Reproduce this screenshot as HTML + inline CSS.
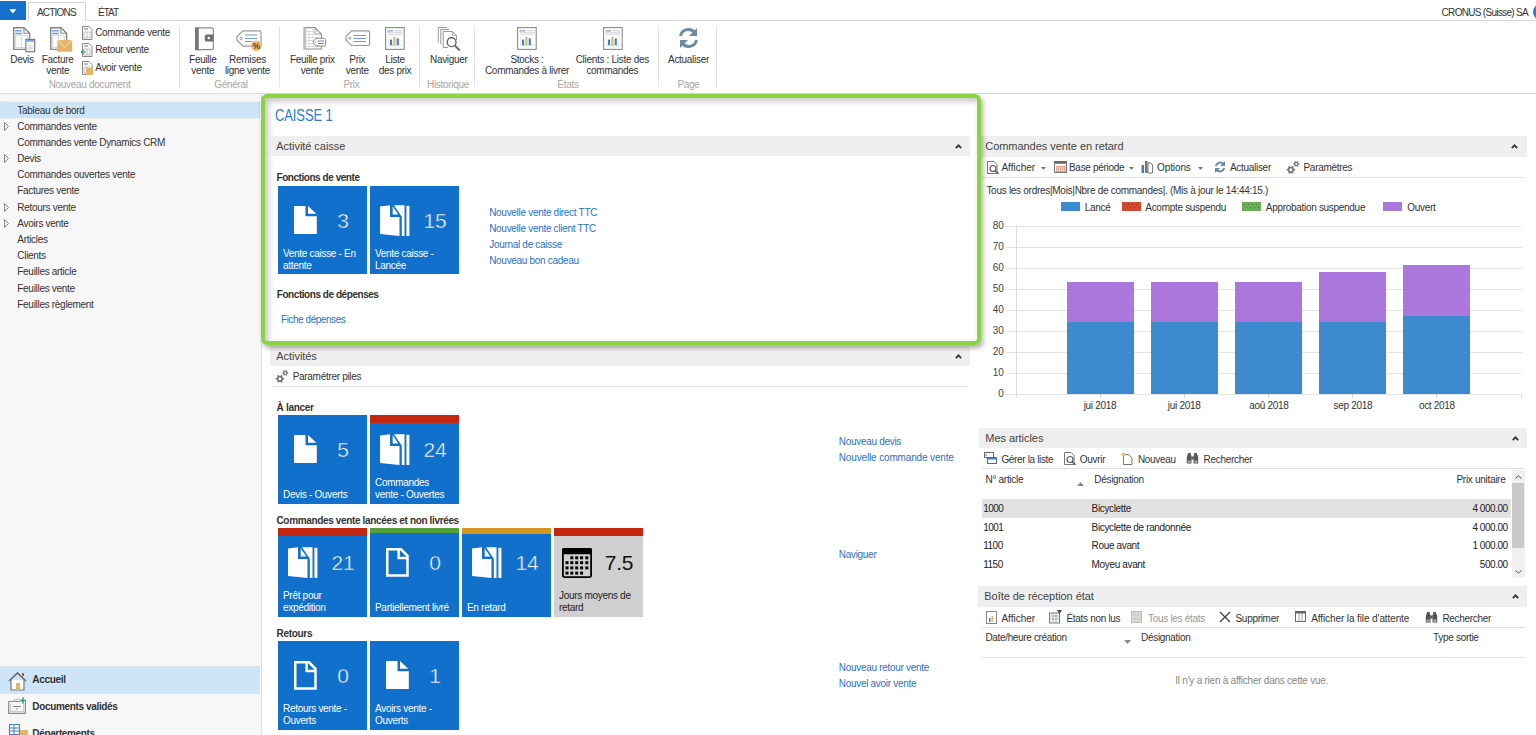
<!DOCTYPE html><html><head><meta charset="utf-8"><style>
html,body{margin:0;padding:0;width:1536px;height:735px;overflow:hidden;background:#fff;position:relative;font-family:"Liberation Sans", sans-serif;}
.t{position:absolute;white-space:nowrap;line-height:1;}
.r{position:absolute;}
</style></head><body>
<div class="r" style="left:0px;top:1px;width:26px;height:19px;background:#1570c9;"></div>
<svg class="r" style="left:9px;top:9px;" width="8" height="5" viewBox="0 0 8 5"><path d="M0.3 0.3 H7.3 L3.8 4.5 Z" fill="#fff"/></svg>
<div class="r" style="left:85px;top:20px;width:1451px;height:1px;background:#d9d9d9;"></div>
<div class="r" style="left:0px;top:20px;width:28px;height:1px;background:#ffffff;"></div>
<div class="r" style="left:28px;top:2px;width:56px;height:18px;border:1px solid #d6d6d6;border-bottom:none;background:#fff"></div>
<div class="t " style="left:37.0px;top:8.00px;font-size:10px;color:#333;letter-spacing:-0.80px;">ACTIONS</div>
<div class="t " style="left:98.0px;top:8.00px;font-size:10px;color:#333;letter-spacing:-1.00px;">ÉTAT</div>
<div class="t " style="left:1441.6px;top:8.00px;font-size:10px;color:#333;letter-spacing:-0.70px;">CRONUS (Suisse) SA</div>
<div class="r" style="left:1533px;top:4px;width:16px;height:16px;border-radius:8px;background:#2f7fd0"></div>
<div class="r" style="left:0px;top:93px;width:1536px;height:1px;background:#dadada;"></div>
<div class="r" style="left:179px;top:26px;width:1px;height:61px;background:#e3e3e3;"></div>
<div class="r" style="left:279px;top:26px;width:1px;height:61px;background:#e3e3e3;"></div>
<div class="r" style="left:419px;top:26px;width:1px;height:61px;background:#e3e3e3;"></div>
<div class="r" style="left:474px;top:26px;width:1px;height:61px;background:#e3e3e3;"></div>
<div class="r" style="left:658px;top:26px;width:1px;height:61px;background:#e3e3e3;"></div>
<div class="r" style="left:716px;top:26px;width:1px;height:61px;background:#e3e3e3;"></div>
<div class="t " style="left:-178.0px;width:400px;text-align:center;top:55.00px;font-size:10px;color:#333;letter-spacing:-0.30px;">Devis</div>
<div class="t " style="left:-142.3px;width:400px;text-align:center;top:55.00px;font-size:10px;color:#333;letter-spacing:-0.30px;">Facture</div>
<div class="t " style="left:-142.3px;width:400px;text-align:center;top:66.00px;font-size:10px;color:#333;letter-spacing:-0.30px;">vente</div>
<div class="t " style="left:95.2px;top:28.00px;font-size:10px;color:#333;letter-spacing:-0.30px;">Commande vente</div>
<div class="t " style="left:95.2px;top:45.00px;font-size:10px;color:#333;letter-spacing:-0.30px;">Retour vente</div>
<div class="t " style="left:95.2px;top:63.00px;font-size:10px;color:#333;letter-spacing:-0.30px;">Avoir vente</div>
<div class="t " style="left:-110.4px;width:400px;text-align:center;top:80.00px;font-size:10px;color:#a6a6a6;letter-spacing:-0.30px;">Nouveau document</div>
<div class="t " style="left:2.8px;width:400px;text-align:center;top:55.00px;font-size:10px;color:#333;letter-spacing:-0.30px;">Feuille</div>
<div class="t " style="left:2.8px;width:400px;text-align:center;top:66.00px;font-size:10px;color:#333;letter-spacing:-0.30px;">vente</div>
<div class="t " style="left:47.5px;width:400px;text-align:center;top:55.00px;font-size:10px;color:#333;letter-spacing:-0.30px;">Remises</div>
<div class="t " style="left:47.5px;width:400px;text-align:center;top:66.00px;font-size:10px;color:#333;letter-spacing:-0.30px;">ligne vente</div>
<div class="t " style="left:31.0px;width:400px;text-align:center;top:80.00px;font-size:10px;color:#a6a6a6;letter-spacing:-0.30px;">Général</div>
<div class="t " style="left:112.3px;width:400px;text-align:center;top:55.00px;font-size:10px;color:#333;letter-spacing:-0.30px;">Feuille prix</div>
<div class="t " style="left:112.3px;width:400px;text-align:center;top:66.00px;font-size:10px;color:#333;letter-spacing:-0.30px;">vente</div>
<div class="t " style="left:157.3px;width:400px;text-align:center;top:55.00px;font-size:10px;color:#333;letter-spacing:-0.30px;">Prix</div>
<div class="t " style="left:157.3px;width:400px;text-align:center;top:66.00px;font-size:10px;color:#333;letter-spacing:-0.30px;">vente</div>
<div class="t " style="left:195.0px;width:400px;text-align:center;top:55.00px;font-size:10px;color:#333;letter-spacing:-0.30px;">Liste</div>
<div class="t " style="left:195.0px;width:400px;text-align:center;top:66.00px;font-size:10px;color:#333;letter-spacing:-0.30px;">des prix</div>
<div class="t " style="left:151.4px;width:400px;text-align:center;top:80.00px;font-size:10px;color:#a6a6a6;letter-spacing:-0.30px;">Prix</div>
<div class="t " style="left:248.8px;width:400px;text-align:center;top:55.00px;font-size:10px;color:#333;letter-spacing:-0.30px;">Naviguer</div>
<div class="t " style="left:248.0px;width:400px;text-align:center;top:80.00px;font-size:10px;color:#a6a6a6;letter-spacing:-0.30px;">Historique</div>
<div class="t " style="left:327.0px;width:400px;text-align:center;top:55.00px;font-size:10px;color:#333;letter-spacing:-0.30px;">Stocks :</div>
<div class="t " style="left:327.0px;width:400px;text-align:center;top:66.00px;font-size:10px;color:#333;letter-spacing:-0.30px;">Commandes à livrer</div>
<div class="t " style="left:412.3px;width:400px;text-align:center;top:55.00px;font-size:10px;color:#333;letter-spacing:-0.30px;">Clients : Liste des</div>
<div class="t " style="left:412.3px;width:400px;text-align:center;top:66.00px;font-size:10px;color:#333;letter-spacing:-0.30px;">commandes</div>
<div class="t " style="left:368.0px;width:400px;text-align:center;top:80.00px;font-size:10px;color:#a6a6a6;letter-spacing:-0.30px;">États</div>
<div class="t " style="left:488.5px;width:400px;text-align:center;top:55.00px;font-size:10px;color:#333;letter-spacing:-0.30px;">Actualiser</div>
<div class="t " style="left:488.5px;width:400px;text-align:center;top:80.00px;font-size:10px;color:#a6a6a6;letter-spacing:-0.30px;">Page</div>
<svg class="r" style="left:13px;top:27px;" width="24" height="27" viewBox="0 0 24 27"><path d="M0.75 0.75 H11 L16.6 6.3 V22.4 H0.75 Z" fill="#fff" stroke="#858585" stroke-width="1.4"/><path d="M10.9 1 V6.3 H16.4" fill="none" stroke="#8a8a8a" stroke-width="1.1"/><rect x="2.2" y="4.1" width="6.6" height="2.2" fill="#d3e3f5"/><rect x="2.2" y="3.2" width="6.6" height="1.1" fill="#5b8bd0"/><rect x="2.2" y="6.1" width="6.6" height="1.1" fill="#5b8bd0"/><path d="M2.6 8.6 H14.3 V20.6 H2.6 Z M8.4 8.6 V20.6" fill="none" stroke="#d0d0d0" stroke-width="0.9"/><rect x="12.9" y="12.4" width="8.8" height="12.3" fill="#fff" stroke="#7a7a7a" stroke-width="1.2"/><rect x="13.5" y="13" width="7.6" height="1.8" fill="#7fa6dc"/><path d="M15 17 H16.5 M15 18.8 H20 M15 20.8 H20 M15 22.2 H19" stroke="#bbb" stroke-width="0.7"/></svg>
<svg class="r" style="left:50px;top:27px;" width="24" height="27" viewBox="0 0 24 27"><path d="M0.75 0.75 H11 L16.6 6.3 V22.4 H0.75 Z" fill="#fff" stroke="#858585" stroke-width="1.4"/><path d="M10.9 1 V6.3 H16.4" fill="none" stroke="#8a8a8a" stroke-width="1.1"/><rect x="2.2" y="4.1" width="6.6" height="2.2" fill="#d3e3f5"/><rect x="2.2" y="3.2" width="6.6" height="1.1" fill="#5b8bd0"/><rect x="2.2" y="6.1" width="6.6" height="1.1" fill="#5b8bd0"/><path d="M2.6 8.6 H14.3 V20.6 H2.6 Z M8.4 8.6 V20.6" fill="none" stroke="#d0d0d0" stroke-width="0.9"/><rect x="7.2" y="13.1" width="14.9" height="11.7" fill="#e5b46a"/><path d="M7.4 13.3 L14.7 20.2 L21.9 13.3" fill="none" stroke="#fbeccd" stroke-width="0.9"/></svg>
<svg class="r" style="left:81px;top:26px;" width="12" height="14" viewBox="0 0 12 14"><path d="M1.5 0.5 H8 L11 3.5 V13.5 H1.5 Z" fill="#fff" stroke="#8a8a8a" stroke-width="1"/><rect x="3" y="2.5" width="4" height="1" fill="#4a7fc4"/><path d="M3 6 H9 V12 H3 Z M6 6 V12" fill="none" stroke="#b0b0b0" stroke-width="0.8"/></svg>
<svg class="r" style="left:81px;top:43px;" width="12" height="14" viewBox="0 0 12 14"><path d="M1.5 0.5 H8 L11 3.5 V13.5 H1.5 Z" fill="#fff" stroke="#8a8a8a" stroke-width="1"/><rect x="3" y="2.5" width="4" height="1" fill="#4a7fc4"/><path d="M3 6 H9 V12 H3 Z M6 6 V12" fill="none" stroke="#b0b0b0" stroke-width="0.8"/><path d="M0 9 H5 M0 9 L2.5 7 M0 9 L2.5 11" stroke="#3f9b6e" stroke-width="1.2" fill="none"/></svg>
<svg class="r" style="left:81px;top:61px;" width="12" height="14" viewBox="0 0 12 14"><path d="M1.5 0.5 H8 L11 3.5 V13.5 H1.5 Z" fill="#fff" stroke="#8a8a8a" stroke-width="1"/><rect x="3" y="2.5" width="4" height="1" fill="#4a7fc4"/><path d="M3 6 H9 V12 H3 Z M6 6 V12" fill="none" stroke="#b0b0b0" stroke-width="0.8"/><rect x="5" y="7" width="7" height="7" fill="#e5b46a"/></svg>
<svg class="r" style="left:194px;top:27px;" width="21" height="24" viewBox="0 0 21 24"><rect x="1.7" y="0.9" width="17.6" height="21.8" rx="1.4" fill="#fff" stroke="#8a8a8a" stroke-width="1.2"/><rect x="1" y="0.4" width="3.8" height="22.9" fill="#777"/><path d="M12.5 7.6 H19.6 V14.6 H12.5 Q10.8 14.6 10.8 12.9 V9.3 Q10.8 7.6 12.5 7.6 Z" fill="#6f6f6f"/><circle cx="14.8" cy="11.1" r="1.25" fill="#fff"/></svg>
<svg class="r" style="left:236px;top:30px;" width="27" height="23" viewBox="0 0 27 23"><path d="M7 0.9 H23.5 Q25 0.9 25 2.4 V14.6 Q25 16.1 23.5 16.1 H7 L1 10.3 V6.7 Z" fill="#fff" stroke="#9a9a9a" stroke-width="1.2"/><circle cx="5.2" cy="8.5" r="1.2" fill="none" stroke="#8a8a8a" stroke-width="0.8"/><path d="M9 5 H21 M9 8.5 H21 M9 11.5 H16" stroke="#6f97d2" stroke-width="1"/><circle cx="20.4" cy="15.8" r="5.4" fill="#e8bc73"/><text x="20.4" y="19" font-size="8.5" font-weight="bold" text-anchor="middle" fill="#5a4630" font-family="Liberation Sans">%</text></svg>
<svg class="r" style="left:303px;top:27px;" width="24" height="24" viewBox="0 0 24 24"><path d="M1.1 0.6 H12 L18.4 7 V22 H1.1 Z" fill="#fff" stroke="#8f8f8f" stroke-width="1.1"/><path d="M12 0.8 V7 H18.2" fill="none" stroke="#999" stroke-width="0.9"/><rect x="1.1" y="0.6" width="2" height="21.4" fill="#bdbdbd"/><path d="M2 4.5 H16" stroke="#cfcfcf" stroke-width="0.8"/><path d="M2 7.5 H16" stroke="#cfcfcf" stroke-width="0.8"/><path d="M2 10.5 H16" stroke="#cfcfcf" stroke-width="0.8"/><path d="M2 13.5 H16" stroke="#cfcfcf" stroke-width="0.8"/><path d="M2 16.5 H16" stroke="#cfcfcf" stroke-width="0.8"/><path d="M2 19.5 H16" stroke="#cfcfcf" stroke-width="0.8"/><path d="M6 2 V21 M10 2 V21 M14 8 V21" stroke="#d5d5d5" stroke-width="0.8"/><path d="M13 11.3 H21.5 Q22.6 11.3 22.6 12.4 V17.9 Q22.6 19 21.5 19 H13 L10.6 16.3 V14 Z" fill="#fff" stroke="#8a8a8a" stroke-width="1"/><circle cx="12.9" cy="15.1" r="0.7" fill="#888"/><path d="M15 14 H21 M15 16.5 H21" stroke="#5f8fd0" stroke-width="1"/></svg>
<svg class="r" style="left:345px;top:30px;" width="26" height="17" viewBox="0 0 26 17"><path d="M6.5 0.9 H23 Q24.6 0.9 24.6 2.5 V13.9 Q24.6 15.5 23 15.5 H6.5 L1 10 V6.4 Z" fill="#fff" stroke="#9a9a9a" stroke-width="1.2"/><circle cx="4.9" cy="8.2" r="1.1" fill="none" stroke="#8a8a8a" stroke-width="0.8"/><path d="M8.5 5.5 H21 M8.5 8.5 H21 M8.5 11.5 H21" stroke="#5f8fd0" stroke-width="0.9"/></svg>
<svg class="r" style="left:385px;top:27px;" width="20" height="23" viewBox="0 0 20 23"><rect x="0.6" y="0.6" width="18.6" height="21.8" fill="#fff" stroke="#8a8a8a" stroke-width="1.1"/><path d="M2.5 3.9 H8" stroke="#6f9ad6" stroke-width="1.1"/><path d="M2.5 5.3 H17.5 M10 3.6 H17.5 M2.5 7.2 H17.5" stroke="#c8c8c8" stroke-width="0.8"/><rect x="5" y="12.6" width="2.1" height="5.4" fill="#3d7cc9"/><rect x="8.3" y="9.7" width="2.2" height="8.3" fill="#e2b56c"/><rect x="11.7" y="11.4" width="2.1" height="6.6" fill="#3d7cc9"/><path d="M3.5 18.3 H16.5" stroke="#aaa" stroke-width="0.6"/><path d="M3.5 10 V18" stroke="#ddd" stroke-width="0.6"/></svg>
<svg class="r" style="left:517px;top:27px;" width="20" height="23" viewBox="0 0 20 23"><rect x="0.6" y="0.6" width="18.6" height="21.8" fill="#fff" stroke="#8a8a8a" stroke-width="1.1"/><path d="M2.5 3.9 H8" stroke="#6f9ad6" stroke-width="1.1"/><path d="M2.5 5.3 H17.5 M10 3.6 H17.5 M2.5 7.2 H17.5" stroke="#c8c8c8" stroke-width="0.8"/><rect x="5" y="12.6" width="2.1" height="5.4" fill="#3d7cc9"/><rect x="8.3" y="9.7" width="2.2" height="8.3" fill="#e2b56c"/><rect x="11.7" y="11.4" width="2.1" height="6.6" fill="#3d7cc9"/><path d="M3.5 18.3 H16.5" stroke="#aaa" stroke-width="0.6"/><path d="M3.5 10 V18" stroke="#ddd" stroke-width="0.6"/></svg>
<svg class="r" style="left:603px;top:27px;" width="20" height="23" viewBox="0 0 20 23"><rect x="0.6" y="0.6" width="18.6" height="21.8" fill="#fff" stroke="#8a8a8a" stroke-width="1.1"/><path d="M2.5 3.9 H8" stroke="#6f9ad6" stroke-width="1.1"/><path d="M2.5 5.3 H17.5 M10 3.6 H17.5 M2.5 7.2 H17.5" stroke="#c8c8c8" stroke-width="0.8"/><rect x="5" y="12.6" width="2.1" height="5.4" fill="#3d7cc9"/><rect x="8.3" y="9.7" width="2.2" height="8.3" fill="#e2b56c"/><rect x="11.7" y="11.4" width="2.1" height="6.6" fill="#3d7cc9"/><path d="M3.5 18.3 H16.5" stroke="#aaa" stroke-width="0.6"/><path d="M3.5 10 V18" stroke="#ddd" stroke-width="0.6"/></svg>
<svg class="r" style="left:437px;top:27px;" width="25" height="25" viewBox="0 0 25 25"><path d="M1.3 15.5 V0.5 H10" fill="none" stroke="#999" stroke-width="1"/><path d="M3.8 17.5 V2.5 H12.5" fill="none" stroke="#999" stroke-width="1"/><path d="M6.2 20.5 V4.5 H15.5 L19.5 8.5 V13" fill="#fff" stroke="#999" stroke-width="1"/><path d="M15.5 4.5 V8.5 H19.5" fill="none" stroke="#aaa" stroke-width="0.8"/><path d="M6.2 20.5 H11" stroke="#999" stroke-width="1"/><circle cx="14.6" cy="15.2" r="4.4" fill="#fff" stroke="#666" stroke-width="1.4"/><path d="M17.8 18.5 L22.8 23.5" stroke="#666" stroke-width="1.8"/></svg>
<svg class="r" style="left:677px;top:27px;" width="23" height="22" viewBox="0 0 23 22"><path d="M3.5 9 A8 8 0 0 1 18 6" fill="none" stroke="#6a8ca2" stroke-width="3"/><path d="M20 1 V9 H12 Z" fill="#6a8ca2"/><path d="M19.5 13 A8 8 0 0 1 5 16" fill="none" stroke="#6a8ca2" stroke-width="3"/><path d="M3 21 V13 H11 Z" fill="#6a8ca2"/></svg>
<div class="r" style="left:0px;top:94px;width:261px;height:641px;background:#f7f7f7;"></div>
<div class="r" style="left:261px;top:94px;width:1px;height:641px;background:#e1e1e1;"></div>
<div class="r" style="left:0px;top:102px;width:260px;height:16px;background:#cde5f7;"></div>
<div class="r" style="left:0;top:101px;width:259px;height:16px;border-top:1px dotted #d6e8f6;border-right:1px dotted #bcd6ec;border-bottom:1px dotted #d6e8f6"></div>
<div class="t " style="left:17.3px;top:106.00px;font-size:10px;color:#333;letter-spacing:-0.30px;">Tableau de bord</div>
<div class="t " style="left:17.3px;top:122.00px;font-size:10px;color:#333;letter-spacing:-0.30px;">Commandes vente</div>
<div class="t " style="left:17.3px;top:138.00px;font-size:10px;color:#333;letter-spacing:-0.30px;">Commandes vente Dynamics CRM</div>
<div class="t " style="left:17.3px;top:154.00px;font-size:10px;color:#333;letter-spacing:-0.30px;">Devis</div>
<div class="t " style="left:17.3px;top:170.00px;font-size:10px;color:#333;letter-spacing:-0.30px;">Commandes ouvertes vente</div>
<div class="t " style="left:17.3px;top:186.00px;font-size:10px;color:#333;letter-spacing:-0.30px;">Factures vente</div>
<div class="t " style="left:17.3px;top:203.00px;font-size:10px;color:#333;letter-spacing:-0.30px;">Retours vente</div>
<div class="t " style="left:17.3px;top:219.00px;font-size:10px;color:#333;letter-spacing:-0.30px;">Avoirs vente</div>
<div class="t " style="left:17.3px;top:235.00px;font-size:10px;color:#333;letter-spacing:-0.30px;">Articles</div>
<div class="t " style="left:17.3px;top:251.00px;font-size:10px;color:#333;letter-spacing:-0.30px;">Clients</div>
<div class="t " style="left:17.3px;top:267.00px;font-size:10px;color:#333;letter-spacing:-0.30px;">Feuilles article</div>
<div class="t " style="left:17.3px;top:284.00px;font-size:10px;color:#333;letter-spacing:-0.30px;">Feuilles vente</div>
<div class="t " style="left:17.3px;top:300.00px;font-size:10px;color:#333;letter-spacing:-0.30px;">Feuilles règlement</div>
<svg class="r" style="left:4px;top:122px;" width="5" height="9" viewBox="0 0 5 9"><path d="M0.5 0.5 L4.5 4.5 L0.5 8.5 Z" fill="none" stroke="#777" stroke-width="0.9"/></svg>
<svg class="r" style="left:4px;top:154px;" width="5" height="9" viewBox="0 0 5 9"><path d="M0.5 0.5 L4.5 4.5 L0.5 8.5 Z" fill="none" stroke="#777" stroke-width="0.9"/></svg>
<svg class="r" style="left:4px;top:203px;" width="5" height="9" viewBox="0 0 5 9"><path d="M0.5 0.5 L4.5 4.5 L0.5 8.5 Z" fill="none" stroke="#777" stroke-width="0.9"/></svg>
<svg class="r" style="left:4px;top:219px;" width="5" height="9" viewBox="0 0 5 9"><path d="M0.5 0.5 L4.5 4.5 L0.5 8.5 Z" fill="none" stroke="#777" stroke-width="0.9"/></svg>
<div class="r" style="left:0px;top:666px;width:261px;height:1px;background:#dcdcdc;"></div>
<div class="r" style="left:0px;top:667px;width:260px;height:27px;background:#cde5f7;"></div>
<div class="t " style="left:32.3px;top:675.00px;font-size:10px;color:#333;letter-spacing:-0.30px;font-weight:bold;">Accueil</div>
<div class="t " style="left:32.3px;top:702.00px;font-size:10px;color:#333;letter-spacing:-0.35px;font-weight:bold;">Documents validés</div>
<div class="t " style="left:32.3px;top:729.00px;font-size:10px;color:#333;letter-spacing:-0.35px;font-weight:bold;">Départements</div>
<svg class="r" style="left:8px;top:672px;" width="19" height="19" viewBox="0 0 19 19"><path d="M1 9 L9.5 1 L18 9" fill="none" stroke="#666" stroke-width="1.6"/><path d="M3 8 V18 H16 V8" fill="#fff" stroke="#777" stroke-width="1.2"/><rect x="8" y="11" width="4" height="7" fill="#e2b76a"/><rect x="14" y="1" width="2" height="3" fill="#d9473a"/></svg>
<svg class="r" style="left:8px;top:697px;" width="19" height="17" viewBox="0 0 19 17"><path d="M0.6 4.5 H12 M17.4 4.5 V16.4 H0.6 V4.5" fill="none" stroke="#8a8a8a" stroke-width="1.1"/><path d="M2.3 6.5 V14.6 H15.7 V6.5" fill="none" stroke="#b5b5b5" stroke-width="0.8"/><path d="M5 9.5 H13" stroke="#777" stroke-width="0.9"/><rect x="8.4" y="11.4" width="1.2" height="1.2" fill="#666"/><path d="M5 3.2 L12 2" stroke="#aaa" stroke-width="0.8"/><path d="M15 0.5 V6.5 M12 3.5 H18" stroke="#3a9a7a" stroke-width="1.6"/></svg>
<svg class="r" style="left:9px;top:724px;" width="20" height="11" viewBox="0 0 20 11"><rect x="0.5" y="0.5" width="10" height="10" fill="#fff" stroke="#3f7fca" stroke-width="1"/><path d="M0.5 4 H10.5 M0.5 7 H10.5 M5 0.5 V11" stroke="#3f7fca" stroke-width="1"/><rect x="11" y="6" width="8" height="5" fill="#e2b76a"/></svg>
<div class="r" style="z-index:9;left:261px;top:94px;width:720px;height:251px;border-radius:6px;box-shadow:2px 3px 5px rgba(0,0,0,0.32)"></div>
<div class="r" style="left:265px;top:98px;width:712px;height:243px;background:#fff;box-shadow:inset 3px 3px 6px rgba(0,0,0,0.24);border-radius:2px;"></div>
<div class="r" style="z-index:10;left:261px;top:94px;width:712px;height:243px;border:4px solid #8cd343;border-radius:6px;"></div>
<div class="t " style="left:275.3px;top:108.00px;font-size:15.6px;color:#2b7bd3;letter-spacing:-0.10px;transform:scaleX(0.83);transform-origin:0 0;">CAISSE 1</div>
<div class="r" style="left:270px;top:136px;width:700px;height:20px;background:#efefef;"></div>
<div class="t " style="left:276.3px;top:141.00px;font-size:11px;color:#444;letter-spacing:-0.05px;">Activité caisse</div>
<svg class="r" style="left:954.5px;top:144px;" width="7" height="5" viewBox="0 0 7 5"><path d="M0.8 4.2 L3.5 1.3 L6.2 4.2" fill="none" stroke="#333" stroke-width="1.7"/></svg>
<div class="t " style="left:276.5px;top:173.00px;font-size:10px;color:#333;letter-spacing:-0.45px;font-weight:bold;">Fonctions de vente</div>
<div class="r" style="left:278px;top:186px;width:89px;height:88px;background:#1170cc;"></div>
<svg class="r" style="left:294px;top:206px;" width="23" height="28" viewBox="0 0 23 28"><path d="M0 0 H11.5 V10.3 H22.8 V28 H0 Z" fill="#fff"/><path d="M14 0 L22.3 7.8 H14 Z" fill="#fff"/></svg>
<div class="t " style="left:143.0px;width:400px;text-align:center;top:210.00px;font-size:21px;color:#fff;letter-spacing:-0.30px;-webkit-text-stroke:0.45px #1170cc;">3</div>
<div class="t " style="left:283.0px;top:249.00px;font-size:10px;color:#fff;letter-spacing:-0.30px;">Vente caisse - En</div>
<div class="t " style="left:283.0px;top:261.00px;font-size:10px;color:#fff;letter-spacing:-0.30px;">attente</div>
<div class="r" style="left:370px;top:186px;width:89px;height:88px;background:#1170cc;"></div>
<svg class="r" style="left:380px;top:204.8px;" width="30" height="31" viewBox="0 0 30 31"><path d="M0 1.5 L10 0.3 V12 H19.5 V31 L0 29 Z" fill="#fff"/><path d="M12.7 1.3 L18.3 9.5 H12.7 Z" fill="#fff"/><path d="M14 0.3 H24.5 V31 H21.8 V11.8 Z" fill="#fff"/><rect x="26.4" y="0.8" width="3" height="30.2" fill="#fff"/></svg>
<div class="t " style="left:235.0px;width:400px;text-align:center;top:210.00px;font-size:21px;color:#fff;letter-spacing:-0.30px;-webkit-text-stroke:0.45px #1170cc;">15</div>
<div class="t " style="left:375.0px;top:249.00px;font-size:10px;color:#fff;letter-spacing:-0.30px;">Vente caisse -</div>
<div class="t " style="left:375.0px;top:261.00px;font-size:10px;color:#fff;letter-spacing:-0.30px;">Lancée</div>
<div class="t " style="left:489.2px;top:208.00px;font-size:10px;color:#2a72c4;letter-spacing:-0.30px;">Nouvelle vente direct TTC</div>
<div class="t " style="left:489.2px;top:224.00px;font-size:10px;color:#2a72c4;letter-spacing:-0.30px;">Nouvelle vente client TTC</div>
<div class="t " style="left:489.2px;top:240.00px;font-size:10px;color:#2a72c4;letter-spacing:-0.30px;">Journal de caisse</div>
<div class="t " style="left:489.2px;top:256.00px;font-size:10px;color:#2a72c4;letter-spacing:-0.30px;">Nouveau bon cadeau</div>
<div class="t " style="left:276.8px;top:290.00px;font-size:10px;color:#333;letter-spacing:-0.45px;font-weight:bold;">Fonctions de dépenses</div>
<div class="t " style="left:281.0px;top:315.00px;font-size:10px;color:#2a72c4;letter-spacing:-0.45px;">Fiche dépenses</div>
<div class="r" style="left:270px;top:346px;width:700px;height:20px;background:#efefef;"></div>
<div class="t " style="left:276.3px;top:351.00px;font-size:11px;color:#444;letter-spacing:-0.05px;">Activités</div>
<svg class="r" style="left:954.5px;top:354px;" width="7" height="5" viewBox="0 0 7 5"><path d="M0.8 4.2 L3.5 1.3 L6.2 4.2" fill="none" stroke="#333" stroke-width="1.7"/></svg>
<svg class="r" style="left:275px;top:369px;" width="16" height="15" viewBox="0 0 16 15"><path d="M7.20,5.82 L7.41,8.35 L9.50,9.80 L7.41,11.25 L7.20,13.78 L4.90,12.70 L2.60,13.78 L2.39,11.25 L0.30,9.80 L2.39,8.35 L2.60,5.82 L4.90,6.90 Z M6.4,9.8 A1.5,1.5 0 1 0 3.4,9.8 A1.5,1.5 0 1 0 6.4,9.8 Z" fill="#6f6f6f" fill-rule="evenodd"/><path d="M12.00,0.96 L12.21,2.80 L13.70,3.90 L12.21,5.00 L12.00,6.84 L10.30,6.10 L8.60,6.84 L8.39,5.00 L6.90,3.90 L8.39,2.80 L8.60,0.96 L10.30,1.70 Z M11.3,3.9 A1,1 0 1 0 9.3,3.9 A1,1 0 1 0 11.3,3.9 Z" fill="#7a7a7a" fill-rule="evenodd"/></svg>
<div class="t " style="left:292.7px;top:372.00px;font-size:10px;color:#333;letter-spacing:-0.30px;">Paramétrer piles</div>
<div class="r" style="left:272px;top:386px;width:696px;height:1px;background:#dedede;"></div>
<div class="t " style="left:276.6px;top:403.00px;font-size:10px;color:#333;letter-spacing:-0.30px;font-weight:bold;">À lancer</div>
<div class="r" style="left:278px;top:415px;width:89px;height:89px;background:#1170cc;"></div>
<svg class="r" style="left:294px;top:435px;" width="23" height="28" viewBox="0 0 23 28"><path d="M0 0 H11.5 V10.3 H22.8 V28 H0 Z" fill="#fff"/><path d="M14 0 L22.3 7.8 H14 Z" fill="#fff"/></svg>
<div class="t " style="left:143.0px;width:400px;text-align:center;top:439.00px;font-size:21px;color:#fff;letter-spacing:-0.30px;-webkit-text-stroke:0.45px #1170cc;">5</div>
<div class="t " style="left:283.0px;top:490.00px;font-size:10px;color:#fff;letter-spacing:-0.30px;">Devis - Ouverts</div>
<div class="r" style="left:370px;top:415px;width:89px;height:89px;background:#1170cc;"></div>
<div class="r" style="left:370px;top:415px;width:89px;height:8px;background:#c4260f;"></div>
<svg class="r" style="left:380px;top:433.8px;" width="30" height="31" viewBox="0 0 30 31"><path d="M0 1.5 L10 0.3 V12 H19.5 V31 L0 29 Z" fill="#fff"/><path d="M12.7 1.3 L18.3 9.5 H12.7 Z" fill="#fff"/><path d="M14 0.3 H24.5 V31 H21.8 V11.8 Z" fill="#fff"/><rect x="26.4" y="0.8" width="3" height="30.2" fill="#fff"/></svg>
<div class="t " style="left:235.0px;width:400px;text-align:center;top:439.00px;font-size:21px;color:#fff;letter-spacing:-0.30px;-webkit-text-stroke:0.45px #1170cc;">24</div>
<div class="t " style="left:375.0px;top:478.00px;font-size:10px;color:#fff;letter-spacing:-0.30px;">Commandes</div>
<div class="t " style="left:375.0px;top:490.00px;font-size:10px;color:#fff;letter-spacing:-0.30px;">vente - Ouvertes</div>
<div class="t " style="left:838.8px;top:437.00px;font-size:10px;color:#2a72c4;letter-spacing:-0.30px;">Nouveau devis</div>
<div class="t " style="left:838.8px;top:453.00px;font-size:10px;color:#2a72c4;letter-spacing:-0.15px;">Nouvelle commande vente</div>
<div class="t " style="left:276.5px;top:516.00px;font-size:10px;color:#333;letter-spacing:-0.35px;font-weight:bold;">Commandes vente lancées et non livrées</div>
<div class="r" style="left:278px;top:528px;width:89px;height:89px;background:#1170cc;"></div>
<div class="r" style="left:278px;top:528px;width:89px;height:8px;background:#c4260f;"></div>
<svg class="r" style="left:288px;top:546.8px;" width="30" height="31" viewBox="0 0 30 31"><path d="M0 1.5 L10 0.3 V12 H19.5 V31 L0 29 Z" fill="#fff"/><path d="M12.7 1.3 L18.3 9.5 H12.7 Z" fill="#fff"/><path d="M14 0.3 H24.5 V31 H21.8 V11.8 Z" fill="#fff"/><rect x="26.4" y="0.8" width="3" height="30.2" fill="#fff"/></svg>
<div class="t " style="left:143.0px;width:400px;text-align:center;top:552.00px;font-size:21px;color:#fff;letter-spacing:-0.30px;-webkit-text-stroke:0.45px #1170cc;">21</div>
<div class="t " style="left:283.0px;top:591.00px;font-size:10px;color:#fff;letter-spacing:-0.30px;">Prêt pour</div>
<div class="t " style="left:283.0px;top:603.00px;font-size:10px;color:#fff;letter-spacing:-0.30px;">expédition</div>
<div class="r" style="left:370px;top:528px;width:89px;height:89px;background:#1170cc;"></div>
<div class="r" style="left:370px;top:528px;width:89px;height:5px;background:#55a03a;"></div>
<svg class="r" style="left:386px;top:548px;" width="23" height="29" viewBox="0 0 23 29"><path d="M1.25 1.25 H15 L21.5 7.8 V27.6 H1.25 Z" fill="none" stroke="#fff" stroke-width="2.5"/><path d="M12.6 1.5 V10 H21.5" fill="none" stroke="#fff" stroke-width="2.4"/></svg>
<div class="t " style="left:235.0px;width:400px;text-align:center;top:552.00px;font-size:21px;color:#fff;letter-spacing:-0.30px;-webkit-text-stroke:0.45px #1170cc;">0</div>
<div class="t " style="left:375.0px;top:603.00px;font-size:10px;color:#fff;letter-spacing:-0.30px;">Partiellement livré</div>
<div class="r" style="left:462px;top:528px;width:89px;height:89px;background:#1170cc;"></div>
<div class="r" style="left:462px;top:528px;width:89px;height:6px;background:#d6961e;"></div>
<svg class="r" style="left:472px;top:546.8px;" width="30" height="31" viewBox="0 0 30 31"><path d="M0 1.5 L10 0.3 V12 H19.5 V31 L0 29 Z" fill="#fff"/><path d="M12.7 1.3 L18.3 9.5 H12.7 Z" fill="#fff"/><path d="M14 0.3 H24.5 V31 H21.8 V11.8 Z" fill="#fff"/><rect x="26.4" y="0.8" width="3" height="30.2" fill="#fff"/></svg>
<div class="t " style="left:327.0px;width:400px;text-align:center;top:552.00px;font-size:21px;color:#fff;letter-spacing:-0.30px;-webkit-text-stroke:0.45px #1170cc;">14</div>
<div class="t " style="left:467.0px;top:603.00px;font-size:10px;color:#fff;letter-spacing:-0.30px;">En retard</div>
<div class="r" style="left:554px;top:528px;width:89px;height:89px;background:#d0d0d0;"></div>
<div class="r" style="left:554px;top:528px;width:89px;height:8px;background:#c4260f;"></div>
<svg class="r" style="left:562px;top:547.6px;" width="30" height="30" viewBox="0 0 30 30"><rect x="0.9" y="0.9" width="28.2" height="28.2" rx="1.5" fill="none" stroke="#000" stroke-width="1.8"/><rect x="0" y="0" width="30" height="6.2" rx="1.5" fill="#000"/><rect x="8.3" y="8.3" width="3" height="3" fill="#000"/><rect x="13.2" y="8.3" width="3" height="3" fill="#000"/><rect x="18.1" y="8.3" width="3" height="3" fill="#000"/><rect x="23.3" y="8.3" width="3" height="3" fill="#000"/><rect x="3.5" y="13.2" width="3" height="3" fill="#000"/><rect x="8.3" y="13.2" width="3" height="3" fill="#000"/><rect x="13.2" y="13.2" width="3" height="3" fill="#000"/><rect x="18.1" y="13.2" width="3" height="3" fill="#000"/><rect x="23.3" y="13.2" width="3" height="3" fill="#000"/><rect x="3.5" y="18.4" width="3" height="3" fill="#000"/><rect x="8.3" y="18.4" width="3" height="3" fill="#000"/><rect x="13.2" y="18.4" width="3" height="3" fill="#000"/><rect x="18.1" y="18.4" width="3" height="3" fill="#000"/><rect x="23.3" y="18.4" width="3" height="3" fill="#000"/><rect x="3.5" y="23.6" width="3" height="3" fill="#000"/><rect x="8.3" y="23.6" width="3" height="3" fill="#000"/><rect x="13.2" y="23.6" width="3" height="3" fill="#000"/><rect x="18.1" y="23.6" width="3" height="3" fill="#000"/></svg>
<div class="t " style="left:419.0px;width:400px;text-align:center;top:552.00px;font-size:21px;color:#111;letter-spacing:-0.30px;">7.5</div>
<div class="t " style="left:559.0px;top:591.00px;font-size:10px;color:#222;letter-spacing:-0.30px;">Jours moyens de</div>
<div class="t " style="left:559.0px;top:603.00px;font-size:10px;color:#222;letter-spacing:-0.30px;">retard</div>
<div class="t " style="left:838.8px;top:550.00px;font-size:10px;color:#2a72c4;letter-spacing:-0.30px;">Naviguer</div>
<div class="t " style="left:276.5px;top:629.00px;font-size:10px;color:#333;letter-spacing:-0.30px;font-weight:bold;">Retours</div>
<div class="r" style="left:278px;top:641px;width:89px;height:89px;background:#1170cc;"></div>
<svg class="r" style="left:294px;top:661px;" width="23" height="29" viewBox="0 0 23 29"><path d="M1.25 1.25 H15 L21.5 7.8 V27.6 H1.25 Z" fill="none" stroke="#fff" stroke-width="2.5"/><path d="M12.6 1.5 V10 H21.5" fill="none" stroke="#fff" stroke-width="2.4"/></svg>
<div class="t " style="left:143.0px;width:400px;text-align:center;top:665.00px;font-size:21px;color:#fff;letter-spacing:-0.30px;-webkit-text-stroke:0.45px #1170cc;">0</div>
<div class="t " style="left:283.0px;top:704.00px;font-size:10px;color:#fff;letter-spacing:-0.30px;">Retours vente -</div>
<div class="t " style="left:283.0px;top:716.00px;font-size:10px;color:#fff;letter-spacing:-0.30px;">Ouverts</div>
<div class="r" style="left:370px;top:641px;width:89px;height:89px;background:#1170cc;"></div>
<svg class="r" style="left:386px;top:661px;" width="23" height="28" viewBox="0 0 23 28"><path d="M0 0 H11.5 V10.3 H22.8 V28 H0 Z" fill="#fff"/><path d="M14 0 L22.3 7.8 H14 Z" fill="#fff"/></svg>
<div class="t " style="left:235.0px;width:400px;text-align:center;top:665.00px;font-size:21px;color:#fff;letter-spacing:-0.30px;-webkit-text-stroke:0.45px #1170cc;">1</div>
<div class="t " style="left:375.0px;top:704.00px;font-size:10px;color:#fff;letter-spacing:-0.30px;">Avoirs vente -</div>
<div class="t " style="left:375.0px;top:716.00px;font-size:10px;color:#fff;letter-spacing:-0.30px;">Ouverts</div>
<div class="t " style="left:838.8px;top:663.00px;font-size:10px;color:#2a72c4;letter-spacing:-0.30px;">Nouveau retour vente</div>
<div class="t " style="left:838.8px;top:679.00px;font-size:10px;color:#2a72c4;letter-spacing:-0.30px;">Nouvel avoir vente</div>
<div class="r" style="left:979px;top:136px;width:548px;height:20.5px;background:#efefef;"></div>
<div class="t " style="left:985.3px;top:141.00px;font-size:11px;color:#444;letter-spacing:-0.05px;">Commandes vente en retard</div>
<svg class="r" style="left:1511px;top:144px;" width="7" height="5" viewBox="0 0 7 5"><path d="M0.8 4.2 L3.5 1.3 L6.2 4.2" fill="none" stroke="#333" stroke-width="1.7"/></svg>
<svg class="r" style="left:987px;top:160.6px;" width="12" height="13" viewBox="0 0 12 13"><path d="M0.5 0.5 H7 L10 3.5 V12.5 H0.5 Z" fill="#fff" stroke="#777" stroke-width="1"/><circle cx="6" cy="7.5" r="3" fill="#fff" stroke="#555" stroke-width="1.1"/><path d="M8 9.8 L11.5 12.8" stroke="#555" stroke-width="1.4"/></svg>
<div class="t " style="left:1001.4px;top:163.00px;font-size:10px;color:#333;letter-spacing:0.00px;">Afficher</div>
<svg class="r" style="left:1040.5px;top:166.5px;" width="5" height="3" viewBox="0 0 5 3"><path d="M0 0 H5 L2.5 3 Z" fill="#777"/></svg>
<svg class="r" style="left:1053.5px;top:160.5px;" width="13" height="12" viewBox="0 0 13 12"><rect x="0.5" y="0.5" width="12" height="11" fill="#fff" stroke="#777" stroke-width="1"/><rect x="0.5" y="0.5" width="12" height="2.2" fill="#666"/><rect x="2.2" y="5.2" width="1.3" height="1.3" fill="#d0502f"/><rect x="4.2" y="5.2" width="1.3" height="1.3" fill="#d0502f"/><rect x="6.2" y="5.2" width="1.3" height="1.3" fill="#d0502f"/><rect x="8.2" y="5.2" width="1.3" height="1.3" fill="#d0502f"/><rect x="10.2" y="5.2" width="1.3" height="1.3" fill="#d0502f"/><rect x="2.2" y="7.4" width="1.3" height="1.3" fill="#d0502f"/><rect x="4.2" y="7.4" width="1.3" height="1.3" fill="#d0502f"/><rect x="6.2" y="7.4" width="1.3" height="1.3" fill="#d0502f"/><rect x="8.2" y="7.4" width="1.3" height="1.3" fill="#d0502f"/><rect x="10.2" y="7.4" width="1.3" height="1.3" fill="#d0502f"/><rect x="2.2" y="9.6" width="1.3" height="1.3" fill="#d0502f"/><rect x="4.2" y="9.6" width="1.3" height="1.3" fill="#d0502f"/><rect x="6.2" y="9.6" width="1.3" height="1.3" fill="#d0502f"/><rect x="8.2" y="9.6" width="1.3" height="1.3" fill="#d0502f"/><rect x="10.2" y="9.6" width="1.3" height="1.3" fill="#d0502f"/></svg>
<div class="t " style="left:1069.0px;top:163.00px;font-size:10px;color:#333;letter-spacing:-0.30px;">Base période</div>
<svg class="r" style="left:1128.5px;top:166.5px;" width="5" height="3" viewBox="0 0 5 3"><path d="M0 0 H5 L2.5 3 Z" fill="#777"/></svg>
<svg class="r" style="left:1141px;top:160px;" width="12" height="14" viewBox="0 0 12 14"><rect x="0.5" y="5" width="2.5" height="8" fill="#3d7cc9"/><rect x="4" y="1" width="2.5" height="12" fill="#777"/><path d="M7 3 H10 L11.5 5 V13 H7 Z" fill="#fff" stroke="#777" stroke-width="1"/></svg>
<div class="t " style="left:1157.0px;top:163.00px;font-size:10px;color:#333;letter-spacing:-0.10px;">Options</div>
<svg class="r" style="left:1197.5px;top:166.5px;" width="5" height="3" viewBox="0 0 5 3"><path d="M0 0 H5 L2.5 3 Z" fill="#777"/></svg>
<svg class="r" style="left:1213.5px;top:160.5px;" width="12" height="12" viewBox="0 0 12 12"><path d="M1.8 5 A4.5 4.5 0 0 1 9.5 3" fill="none" stroke="#6a8ca2" stroke-width="2"/><path d="M11 0 V5 H6 Z" fill="#6a8ca2"/><path d="M10.2 7 A4.5 4.5 0 0 1 2.5 9" fill="none" stroke="#6a8ca2" stroke-width="2"/><path d="M1 12 V7 H6 Z" fill="#6a8ca2"/></svg>
<div class="t " style="left:1230.0px;top:163.00px;font-size:10px;color:#333;letter-spacing:-0.30px;">Actualiser</div>
<svg class="r" style="left:1286px;top:160px;" width="16" height="15" viewBox="0 0 16 15"><path d="M7.20,5.82 L7.41,8.35 L9.50,9.80 L7.41,11.25 L7.20,13.78 L4.90,12.70 L2.60,13.78 L2.39,11.25 L0.30,9.80 L2.39,8.35 L2.60,5.82 L4.90,6.90 Z M6.4,9.8 A1.5,1.5 0 1 0 3.4,9.8 A1.5,1.5 0 1 0 6.4,9.8 Z" fill="#6f6f6f" fill-rule="evenodd"/><path d="M12.00,0.96 L12.21,2.80 L13.70,3.90 L12.21,5.00 L12.00,6.84 L10.30,6.10 L8.60,6.84 L8.39,5.00 L6.90,3.90 L8.39,2.80 L8.60,0.96 L10.30,1.70 Z M11.3,3.9 A1,1 0 1 0 9.3,3.9 A1,1 0 1 0 11.3,3.9 Z" fill="#7a7a7a" fill-rule="evenodd"/></svg>
<div class="t " style="left:1303.5px;top:163.00px;font-size:10px;color:#333;letter-spacing:-0.30px;">Paramètres</div>
<div class="r" style="left:982px;top:177px;width:543px;height:1px;background:#dedede;"></div>
<div class="t " style="left:986.4px;top:186.00px;font-size:10px;color:#333;letter-spacing:-0.28px;">Tous les ordres|Mois|Nbre de commandes|. (Mis à jour le 14:44:15.)</div>
<div class="r" style="left:1061px;top:202px;width:19px;height:9px;background:#3e8ad0;"></div>
<div class="t " style="left:1084.8px;top:203.00px;font-size:10px;color:#333;letter-spacing:-0.30px;">Lancé</div>
<div class="r" style="left:1121.5px;top:202px;width:19px;height:9px;background:#d24a32;"></div>
<svg class="r" style="left:1121.5px;top:202px;" width="19" height="9" viewBox="0 0 19 9"><rect x="2" y="2" width="1" height="1" fill="#9e2a1a"/><rect x="4" y="5" width="1" height="1" fill="#9e2a1a"/><rect x="6" y="2" width="1" height="1" fill="#9e2a1a"/><rect x="8" y="5" width="1" height="1" fill="#9e2a1a"/><rect x="10" y="2" width="1" height="1" fill="#9e2a1a"/><rect x="12" y="5" width="1" height="1" fill="#9e2a1a"/><rect x="14" y="2" width="1" height="1" fill="#9e2a1a"/><rect x="16" y="5" width="1" height="1" fill="#9e2a1a"/></svg>
<div class="t " style="left:1145.3px;top:203.00px;font-size:10px;color:#333;letter-spacing:-0.30px;">Acompte suspendu</div>
<div class="r" style="left:1242px;top:202px;width:19px;height:9px;background:#6aae5a;"></div>
<svg class="r" style="left:1242px;top:202px;" width="19" height="9" viewBox="0 0 19 9"><rect x="2" y="2" width="1" height="1" fill="#3f7f35"/><rect x="4" y="5" width="1" height="1" fill="#3f7f35"/><rect x="6" y="2" width="1" height="1" fill="#3f7f35"/><rect x="8" y="5" width="1" height="1" fill="#3f7f35"/><rect x="10" y="2" width="1" height="1" fill="#3f7f35"/><rect x="12" y="5" width="1" height="1" fill="#3f7f35"/><rect x="14" y="2" width="1" height="1" fill="#3f7f35"/><rect x="16" y="5" width="1" height="1" fill="#3f7f35"/></svg>
<div class="t " style="left:1265.8px;top:203.00px;font-size:10px;color:#333;letter-spacing:-0.30px;">Approbation suspendue</div>
<div class="r" style="left:1383.4px;top:202px;width:19px;height:9px;background:#ab77dc;"></div>
<div class="t " style="left:1407.2px;top:203.00px;font-size:10px;color:#333;letter-spacing:-0.30px;">Ouvert</div>
<div class="r" style="left:1005.6px;top:226px;width:516px;height:1px;background:#e3e3e3;"></div>
<div class="t " style="right:532.5px;top:221.00px;font-size:10px;color:#444;letter-spacing:-0.20px;">80</div>
<div class="r" style="left:1005.6px;top:247px;width:516px;height:1px;background:#e3e3e3;"></div>
<div class="t " style="right:532.5px;top:242.00px;font-size:10px;color:#444;letter-spacing:-0.20px;">70</div>
<div class="r" style="left:1005.6px;top:268px;width:516px;height:1px;background:#e3e3e3;"></div>
<div class="t " style="right:532.5px;top:263.00px;font-size:10px;color:#444;letter-spacing:-0.20px;">60</div>
<div class="r" style="left:1005.6px;top:289px;width:516px;height:1px;background:#e3e3e3;"></div>
<div class="t " style="right:532.5px;top:284.00px;font-size:10px;color:#444;letter-spacing:-0.20px;">50</div>
<div class="r" style="left:1005.6px;top:310px;width:516px;height:1px;background:#e3e3e3;"></div>
<div class="t " style="right:532.5px;top:305.00px;font-size:10px;color:#444;letter-spacing:-0.20px;">40</div>
<div class="r" style="left:1005.6px;top:331px;width:516px;height:1px;background:#e3e3e3;"></div>
<div class="t " style="right:532.5px;top:326.00px;font-size:10px;color:#444;letter-spacing:-0.20px;">30</div>
<div class="r" style="left:1005.6px;top:352px;width:516px;height:1px;background:#e3e3e3;"></div>
<div class="t " style="right:532.5px;top:347.00px;font-size:10px;color:#444;letter-spacing:-0.20px;">20</div>
<div class="r" style="left:1005.6px;top:373px;width:516px;height:1px;background:#e3e3e3;"></div>
<div class="t " style="right:532.5px;top:368.00px;font-size:10px;color:#444;letter-spacing:-0.20px;">10</div>
<div class="r" style="left:1005.6px;top:394px;width:516px;height:1px;background:#e3e3e3;"></div>
<div class="t " style="right:532.5px;top:389.00px;font-size:10px;color:#444;letter-spacing:-0.20px;">0</div>
<div class="r" style="left:1016px;top:225px;width:1px;height:173px;background:#dcdcdc;"></div>
<div class="r" style="left:1521px;top:393px;width:1px;height:5px;background:#dcdcdc;"></div>
<div class="r" style="left:1066.5px;top:282.3px;width:67px;height:39.900000000000034px;background:#ab77dc;"></div>
<div class="r" style="left:1066.5px;top:322.20000000000005px;width:67px;height:71.39999999999998px;background:#3e8ace;"></div>
<div class="r" style="left:1099.5px;top:394px;width:1px;height:4px;background:#cfcfcf;"></div>
<div class="t " style="left:900.0px;width:400px;text-align:center;top:401.00px;font-size:10px;color:#333;letter-spacing:-0.30px;">jui 2018</div>
<div class="r" style="left:1150.7px;top:282.3px;width:67px;height:39.900000000000034px;background:#ab77dc;"></div>
<div class="r" style="left:1150.7px;top:322.20000000000005px;width:67px;height:71.39999999999998px;background:#3e8ace;"></div>
<div class="r" style="left:1183.7px;top:394px;width:1px;height:4px;background:#cfcfcf;"></div>
<div class="t " style="left:984.2px;width:400px;text-align:center;top:401.00px;font-size:10px;color:#333;letter-spacing:-0.30px;">jui 2018</div>
<div class="r" style="left:1235.4px;top:282.3px;width:67px;height:39.900000000000034px;background:#ab77dc;"></div>
<div class="r" style="left:1235.4px;top:322.20000000000005px;width:67px;height:71.39999999999998px;background:#3e8ace;"></div>
<div class="r" style="left:1268.4px;top:394px;width:1px;height:4px;background:#cfcfcf;"></div>
<div class="t " style="left:1068.9px;width:400px;text-align:center;top:401.00px;font-size:10px;color:#333;letter-spacing:-0.30px;">aoû 2018</div>
<div class="r" style="left:1319.4px;top:271.8px;width:67px;height:50.400000000000034px;background:#ab77dc;"></div>
<div class="r" style="left:1319.4px;top:322.20000000000005px;width:67px;height:71.39999999999998px;background:#3e8ace;"></div>
<div class="r" style="left:1352.4px;top:394px;width:1px;height:4px;background:#cfcfcf;"></div>
<div class="t " style="left:1152.9px;width:400px;text-align:center;top:401.00px;font-size:10px;color:#333;letter-spacing:-0.30px;">sep 2018</div>
<div class="r" style="left:1403.4px;top:265.08000000000004px;width:67px;height:50.81999999999999px;background:#ab77dc;"></div>
<div class="r" style="left:1403.4px;top:315.90000000000003px;width:67px;height:77.69999999999999px;background:#3e8ace;"></div>
<div class="r" style="left:1436.4px;top:394px;width:1px;height:4px;background:#cfcfcf;"></div>
<div class="t " style="left:1236.9px;width:400px;text-align:center;top:401.00px;font-size:10px;color:#333;letter-spacing:-0.30px;">oct 2018</div>
<div class="r" style="left:979px;top:427.5px;width:548px;height:20.5px;background:#efefef;"></div>
<div class="t " style="left:985.3px;top:433.00px;font-size:11px;color:#444;letter-spacing:-0.05px;">Mes articles</div>
<svg class="r" style="left:1511.5px;top:435.5px;" width="7" height="5" viewBox="0 0 7 5"><path d="M0.8 4.2 L3.5 1.3 L6.2 4.2" fill="none" stroke="#333" stroke-width="1.7"/></svg>
<svg class="r" style="left:984px;top:452px;" width="13" height="12" viewBox="0 0 13 12"><rect x="0.5" y="0.5" width="9" height="5" fill="#fff" stroke="#666" stroke-width="1"/><rect x="3.5" y="5.5" width="9" height="6" fill="#fff" stroke="#666" stroke-width="1"/><rect x="3.5" y="5.5" width="9" height="2" fill="#3d7cc9"/><path d="M0 3 H3" stroke="#3d7cc9" stroke-width="1"/></svg>
<div class="t " style="left:1001.4px;top:455.00px;font-size:10px;color:#333;letter-spacing:-0.35px;">Gérer la liste</div>
<svg class="r" style="left:1064px;top:452px;" width="12" height="13" viewBox="0 0 12 13"><path d="M0.5 0.5 H7 L10 3.5 V12.5 H0.5 Z" fill="#fff" stroke="#777" stroke-width="1"/><circle cx="6" cy="7.5" r="3" fill="#fff" stroke="#555" stroke-width="1.1"/><path d="M8 9.8 L11.5 12.8" stroke="#555" stroke-width="1.4"/></svg>
<div class="t " style="left:1079.8px;top:455.00px;font-size:10px;color:#333;letter-spacing:-0.30px;">Ouvrir</div>
<svg class="r" style="left:1120.5px;top:451.5px;" width="12" height="13" viewBox="0 0 12 13"><path d="M2.5 2.5 H7.5 L11 6 V12.5 H2.5 Z" fill="#fff" stroke="#777" stroke-width="1"/><circle cx="2.5" cy="2.5" r="2" fill="#f0c060"/></svg>
<div class="t " style="left:1137.9px;top:455.00px;font-size:10px;color:#333;letter-spacing:-0.30px;">Nouveau</div>
<svg class="r" style="left:1186px;top:452px;" width="13" height="12" viewBox="0 0 13 12"><path d="M2.3 1 H4.8 V3.5 H5.5 V11.5 H0.8 V5 Z M8.2 1 H10.7 L12.2 5 V11.5 H7.5 V3.5 H8.2 Z" fill="#555"/><rect x="5.4" y="4.5" width="2.2" height="3" fill="#555"/><rect x="1.6" y="8.5" width="3.1" height="2.3" fill="#aaa"/><rect x="8.3" y="8.5" width="3.1" height="2.3" fill="#aaa"/></svg>
<div class="t " style="left:1203.5px;top:455.00px;font-size:10px;color:#333;letter-spacing:-0.30px;">Rechercher</div>
<div class="r" style="left:982px;top:468px;width:542px;height:1px;background:#dedede;"></div>
<div class="t " style="left:985.5px;top:475.00px;font-size:10px;color:#333;letter-spacing:-0.30px;">N° article</div>
<svg class="r" style="left:1077px;top:482px;" width="7" height="4" viewBox="0 0 7 4"><path d="M0 4 L3.5 0 L7 4 Z" fill="#888"/></svg>
<div class="t " style="left:1094.3px;top:475.00px;font-size:10px;color:#333;letter-spacing:-0.30px;">Désignation</div>
<div class="t " style="right:30.6px;top:475.00px;font-size:10px;color:#333;letter-spacing:-0.30px;">Prix unitaire</div>
<div class="r" style="left:982px;top:499px;width:529px;height:19px;background:#e1e1e1;"></div>
<div class="t " style="left:983.2px;top:504.00px;font-size:10px;color:#222;letter-spacing:-0.50px;">1000</div>
<div class="t " style="left:1091.6px;top:504.00px;font-size:10px;color:#222;letter-spacing:-0.35px;">Bicyclette</div>
<div class="t " style="right:28.3px;top:504.00px;font-size:10px;color:#222;letter-spacing:-0.45px;">4 000.00</div>
<div class="t " style="left:983.2px;top:523.00px;font-size:10px;color:#222;letter-spacing:-0.50px;">1001</div>
<div class="t " style="left:1091.6px;top:523.00px;font-size:10px;color:#222;letter-spacing:-0.35px;">Bicyclette de randonnée</div>
<div class="t " style="right:28.3px;top:523.00px;font-size:10px;color:#222;letter-spacing:-0.45px;">4 000.00</div>
<div class="t " style="left:983.2px;top:541.00px;font-size:10px;color:#222;letter-spacing:-0.50px;">1100</div>
<div class="t " style="left:1091.6px;top:541.00px;font-size:10px;color:#222;letter-spacing:-0.35px;">Roue avant</div>
<div class="t " style="right:28.3px;top:541.00px;font-size:10px;color:#222;letter-spacing:-0.45px;">1 000.00</div>
<div class="t " style="left:983.2px;top:560.00px;font-size:10px;color:#222;letter-spacing:-0.50px;">1150</div>
<div class="t " style="left:1091.6px;top:560.00px;font-size:10px;color:#222;letter-spacing:-0.35px;">Moyeu avant</div>
<div class="t " style="right:28.3px;top:560.00px;font-size:10px;color:#222;letter-spacing:-0.45px;">500.00</div>
<div class="r" style="left:1511.5px;top:470px;width:13px;height:108px;background:#f0f0f0;"></div>
<div class="r" style="left:1512px;top:483px;width:12px;height:65px;background:#c9c9c9;"></div>
<svg class="r" style="left:1514.5px;top:474.5px;" width="7" height="4" viewBox="0 0 7 4"><path d="M0.5 3.5 L3.5 0.8 L6.5 3.5" fill="none" stroke="#555" stroke-width="1"/></svg>
<svg class="r" style="left:1514.5px;top:569.5px;" width="7" height="4" viewBox="0 0 7 4"><path d="M0.5 0.5 L3.5 3.2 L6.5 0.5" fill="none" stroke="#555" stroke-width="1"/></svg>
<div class="r" style="left:978px;top:585.5px;width:549px;height:21px;background:#efefef;"></div>
<div class="t " style="left:984.3px;top:591.00px;font-size:11px;color:#444;letter-spacing:-0.05px;">Boîte de réception état</div>
<svg class="r" style="left:1511.5px;top:593.5px;" width="7" height="5" viewBox="0 0 7 5"><path d="M0.8 4.2 L3.5 1.3 L6.2 4.2" fill="none" stroke="#333" stroke-width="1.7"/></svg>
<svg class="r" style="left:985.5px;top:610.5px;" width="11" height="13" viewBox="0 0 11 13"><rect x="0.5" y="0.5" width="10" height="12" fill="#fff" stroke="#888" stroke-width="1"/><rect x="3" y="7" width="1.5" height="4" fill="#3d7cc9"/><rect x="5.5" y="5" width="1.5" height="6" fill="#e5b46a"/></svg>
<div class="t " style="left:1001.4px;top:614.00px;font-size:10px;color:#333;letter-spacing:0.00px;">Afficher</div>
<svg class="r" style="left:1049px;top:609.5px;" width="13" height="14" viewBox="0 0 13 14"><rect x="0.5" y="3" width="10" height="10" fill="#fff" stroke="#777" stroke-width="1"/><path d="M0.5 6 H10.5 M0.5 9 H10.5 M4 3 V13 M7 3 V13" stroke="#999" stroke-width="0.8"/><path d="M8 0 H13 L10.5 4 Z" fill="#444"/></svg>
<div class="t " style="left:1066.4px;top:614.00px;font-size:10px;color:#333;letter-spacing:-0.30px;">États non lus</div>
<svg class="r" style="left:1131px;top:610.5px;" width="11" height="12" viewBox="0 0 11 12"><rect x="0.5" y="0.5" width="10" height="11" fill="#ddd" stroke="#bbb" stroke-width="1"/><path d="M0.5 4 H10.5 M0.5 7.5 H10.5 M4 0.5 V11.5 M7 0.5 V11.5" stroke="#c8c8c8" stroke-width="0.8"/></svg>
<div class="t " style="left:1148.0px;top:614.00px;font-size:10px;color:#999;letter-spacing:-0.30px;">Tous les états</div>
<svg class="r" style="left:1218.5px;top:610.5px;" width="12" height="12" viewBox="0 0 12 12"><path d="M1 1 L11 11 M11 1 L1 11" stroke="#444" stroke-width="1.4"/></svg>
<div class="t " style="left:1235.5px;top:614.00px;font-size:10px;color:#333;letter-spacing:-0.30px;">Supprimer</div>
<svg class="r" style="left:1295px;top:611px;" width="11" height="11" viewBox="0 0 11 11"><rect x="0.5" y="0.5" width="10" height="10" fill="#fff" stroke="#666" stroke-width="1"/><rect x="0.5" y="0.5" width="10" height="2" fill="#666"/><path d="M4 2 V10.5 M7 2 V10.5" stroke="#888" stroke-width="0.8"/></svg>
<div class="t " style="left:1311.2px;top:614.00px;font-size:10px;color:#333;letter-spacing:-0.10px;">Afficher la file d'attente</div>
<svg class="r" style="left:1425px;top:610.5px;" width="13" height="12" viewBox="0 0 13 12"><path d="M2.3 1 H4.8 V3.5 H5.5 V11.5 H0.8 V5 Z M8.2 1 H10.7 L12.2 5 V11.5 H7.5 V3.5 H8.2 Z" fill="#555"/><rect x="5.4" y="4.5" width="2.2" height="3" fill="#555"/><rect x="1.6" y="8.5" width="3.1" height="2.3" fill="#aaa"/><rect x="8.3" y="8.5" width="3.1" height="2.3" fill="#aaa"/></svg>
<div class="t " style="left:1442.4px;top:614.00px;font-size:10px;color:#333;letter-spacing:-0.30px;">Rechercher</div>
<div class="r" style="left:982px;top:627px;width:543px;height:1px;background:#dedede;"></div>
<div class="t " style="left:985.5px;top:633.00px;font-size:10px;color:#333;letter-spacing:-0.35px;">Date/heure création</div>
<svg class="r" style="left:1123.5px;top:640px;" width="7" height="4" viewBox="0 0 7 4"><path d="M0 0 L3.5 4 L7 0 Z" fill="#888"/></svg>
<div class="t " style="left:1141.0px;top:633.00px;font-size:10px;color:#333;letter-spacing:-0.30px;">Désignation</div>
<div class="t " style="left:1433.0px;top:633.00px;font-size:10px;color:#333;letter-spacing:-0.30px;">Type sortie</div>
<div class="r" style="left:982px;top:657px;width:543px;height:1px;background:#e3e3e3;"></div>
<div class="t " style="left:1051.7px;width:400px;text-align:center;top:676.00px;font-size:10px;color:#888;letter-spacing:-0.24px;">Il n'y a rien à afficher dans cette vue.</div>
</body></html>
